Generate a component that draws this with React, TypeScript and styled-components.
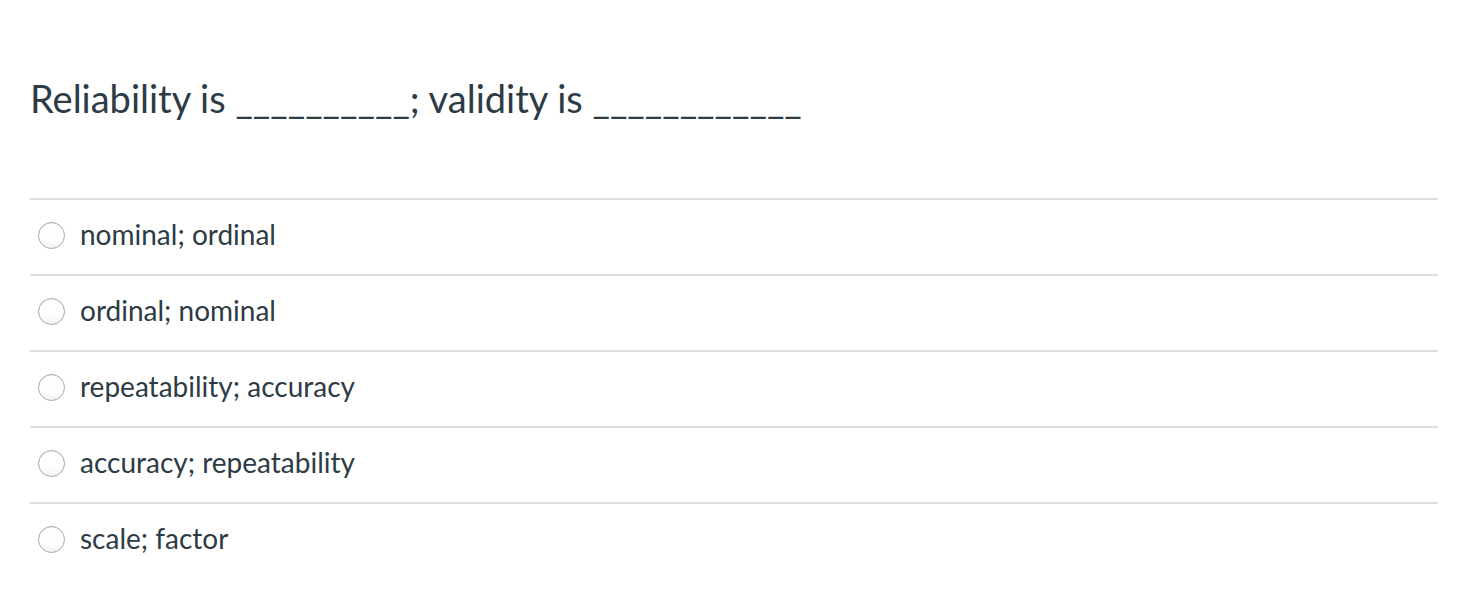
import React from 'react';
import styled, { createGlobalStyle } from 'styled-components';

const GlobalStyle = createGlobalStyle`
  body {
    margin: 0;
    background: #ffffff;
    font-family: Lato, "Open Sans", sans-serif;
    color: #2d3b45;
  }
`;

const Page = styled.div`
  width: 1408px;
  padding: 0 34px 0 30px;
`;

const Question = styled.p`
  margin: 0;
  padding-top: 73px;
  height: 198px;
  box-sizing: border-box;
  font-size: 38px;
  line-height: 50px;
`;

const AnswerList = styled.div`
  display: flex;
  flex-direction: column;
`;

const Answer = styled.label`
  display: flex;
  align-items: center;
  gap: 15px;
  height: 76px;
  box-sizing: border-box;
  border-top: 2px solid #dddddd;
  padding-left: 8px;
  padding-bottom: 7px;
  font-size: 28px;
  cursor: pointer;
`;

const Radio = styled.span`
  width: 27px;
  height: 27px;
  box-sizing: border-box;
  border-radius: 50%;
  border: 1px solid #a6a6a6;
  background: linear-gradient(#ffffff 60%, #f3f3f3);
  box-shadow: inset 0 1px 1px rgba(0, 0, 0, 0.06);
  flex-shrink: 0;
  margin-top: 4px;
`;

const answers = [
  'nominal; ordinal',
  'ordinal; nominal',
  'repeatability; accuracy',
  'accuracy; repeatability',
  'scale; factor',
];

export default function App() {
  return (
    <Page>
      <GlobalStyle />
      <Question>Reliability is __________; validity is ____________</Question>
      <AnswerList>
        {answers.map((a) => (
          <Answer key={a}>
            <Radio />
            {a}
          </Answer>
        ))}
      </AnswerList>
    </Page>
  );
}
